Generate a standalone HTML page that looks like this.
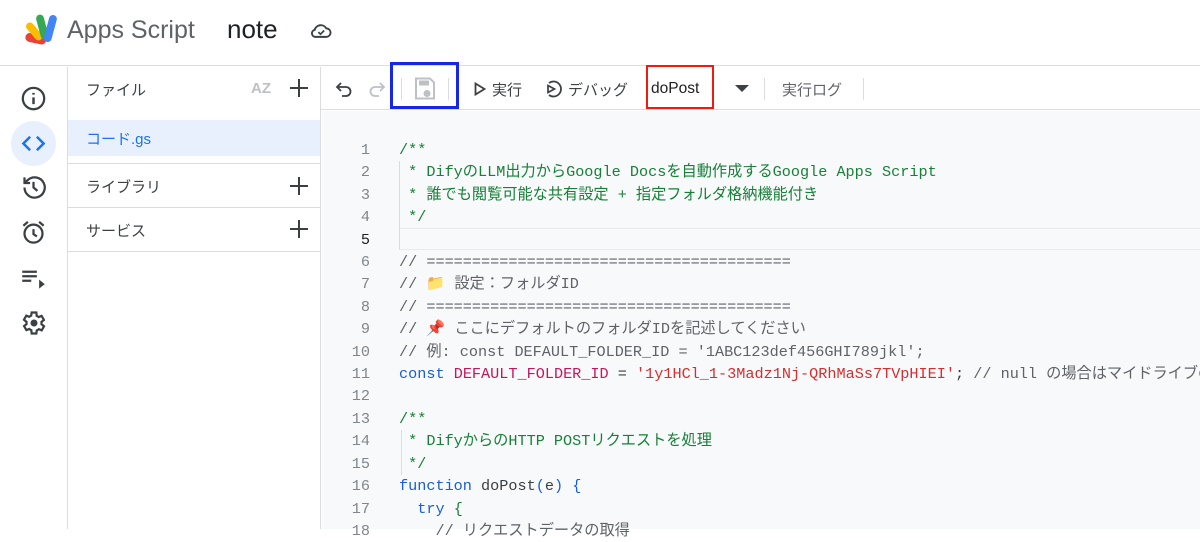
<!DOCTYPE html>
<html><head><meta charset="utf-8"><style>
*{box-sizing:border-box;margin:0;padding:0}
body{width:1200px;height:529px;overflow:hidden;background:#fff;font-family:"Liberation Sans","Noto Sans CJK JP",sans-serif;color:#3c4043;position:relative}
.abs{position:absolute}
.hdr{left:0;top:0;width:1200px;height:66px;border-bottom:1px solid #dadce0}
.rail{left:0;top:67px;width:68px;height:462px;border-right:1px solid #dadce0}
.files{left:68px;top:67px;width:253px;height:462px;border-right:1px solid #dadce0}
.tb{left:321px;top:67px;width:879px;height:43px;border-bottom:1px solid #dadce0;font-size:15px}
.ed{left:322px;top:111px;width:878px;height:418px;background:#f8f9fa}
.code{font-family:"Liberation Mono","Noto Sans CJK JP",monospace;font-size:15.2px;white-space:pre;line-height:22.4px}
.ln{left:320px;width:50px;text-align:right;color:#80868b}
.c{color:#188038}.k{color:#1a5fd3}.v{color:#c2185b}.s{color:#d32f2f}.g{color:#5f6368}
</style></head><body>
<div class="abs hdr">
 <svg class="abs" style="left:23px;top:13px" width="40" height="34" viewBox="0 0 36 30">
  <rect x="2" y="19" width="19" height="8" rx="4" fill="#ea4335" transform="rotate(12 12 23)"/>
  <rect x="7" y="7" width="7" height="19" rx="3.5" fill="#fbbc04" transform="rotate(-40 10 17)"/>
  <rect x="14" y="1" width="7" height="23" rx="3.5" fill="#34a853" transform="rotate(-15 17 13)"/>
  <rect x="21" y="1" width="7" height="25" rx="3.5" fill="#4285f4" transform="rotate(15 24 14)"/>
 </svg>
 <div class="abs" style="left:67px;top:16px;font-size:25px;color:#5f6368">Apps Script</div>
 <div class="abs" style="left:227px;top:14px;font-size:26px;color:#202124">note</div>
 <svg class="abs" style="left:310px;top:22px" width="22" height="17" viewBox="0 0 20 16"><path d="M5 14h10a4 4 0 0 0 0-8 6 6 0 0 0-11 1.5A3.3 3.3 0 0 0 5 14z" fill="none" stroke="#3c4043" stroke-width="1.8"/><path d="M7.5 9.5l2 2 3.5-3.5" fill="none" stroke="#3c4043" stroke-width="1.6"/></svg>
</div>
<div class="abs rail">
 <svg class="abs" style="left:20px;top:18px" width="27" height="27" viewBox="0 0 24 24"><circle cx="12" cy="12" r="9.5" fill="none" stroke="#3c4043" stroke-width="2"/><path d="M12 11v6M12 7v1.5" stroke="#3c4043" stroke-width="2.2"/></svg>
 <div class="abs" style="left:11px;top:54px;width:45px;height:45px;border-radius:50%;background:#e8f0fe"></div>
 <svg class="abs" style="left:20px;top:63px" width="27" height="27" viewBox="0 0 24 24"><path d="M9 6l-6 6 6 6M15 6l6 6-6 6" fill="none" stroke="#1a73e8" stroke-width="2.2"/></svg>
 <svg class="abs" style="left:20px;top:107px" width="27" height="27" viewBox="0 0 24 24"><path d="M4 12a9 9 0 1 0 3-6.7L4 8" fill="none" stroke="#3c4043" stroke-width="2"/><path d="M4 3v5h5" fill="none" stroke="#3c4043" stroke-width="2"/><path d="M12 7v5l3.5 3" fill="none" stroke="#3c4043" stroke-width="2"/></svg>
 <svg class="abs" style="left:20px;top:152px" width="27" height="27" viewBox="0 0 24 24"><circle cx="12" cy="13" r="8" fill="none" stroke="#3c4043" stroke-width="2"/><path d="M12 9v4.5l3 2M3 6l4-3.5M21 6l-4-3.5" fill="none" stroke="#3c4043" stroke-width="2"/></svg>
 <svg class="abs" style="left:20px;top:198px" width="27" height="27" viewBox="0 0 24 24"><path d="M2 6h13M2 10h13M2 14h8" stroke="#3c4043" stroke-width="2"/><path d="M17 13l5 4-5 4z" fill="#3c4043"/></svg>
 <svg class="abs" style="left:20px;top:242px" width="28" height="28" viewBox="0 0 24 24"><path d="M19.4 13a7.5 7.5 0 0 0 0-2l2.1-1.6-2-3.5-2.5 1a7 7 0 0 0-1.7-1L15 3h-4l-.4 2.7a7 7 0 0 0-1.7 1l-2.5-1-2 3.5L6.6 11a7.5 7.5 0 0 0 0 2l-2.1 1.6 2 3.5 2.5-1a7 7 0 0 0 1.7 1L11 21h4l.4-2.7a7 7 0 0 0 1.7-1l2.5 1 2-3.5z" transform="translate(-1 0)" fill="none" stroke="#3c4043" stroke-width="1.9"/><circle cx="12" cy="12" r="3" fill="#3c4043"/></svg>
</div>
<div class="abs files">
 <div class="abs" style="left:18px;top:12px;font-size:15px">ファイル</div>
 <div class="abs" style="left:183px;top:13px;font-size:15px;color:#bdc1c6;font-weight:bold">AZ</div>
 <svg class="abs" style="left:221px;top:11px" width="20" height="20"><path d="M10 1v18M1 10h18" stroke="#3c4043" stroke-width="2"/></svg>
 <div class="abs" style="left:0;top:53px;width:252px;height:36px;background:#e8f0fe"></div>
 <div class="abs" style="left:18px;top:61px;font-size:15px;color:#1a73e8">コード.gs</div>
 <div class="abs" style="left:0;top:96px;width:252px;border-top:1px solid #dadce0"></div>
 <div class="abs" style="left:18px;top:109px;font-size:15px">ライブラリ</div>
 <svg class="abs" style="left:221px;top:109px" width="20" height="20"><path d="M10 1v18M1 10h18" stroke="#3c4043" stroke-width="2"/></svg>
 <div class="abs" style="left:0;top:140px;width:252px;border-top:1px solid #dadce0"></div>
 <div class="abs" style="left:18px;top:153px;font-size:15px">サービス</div>
 <svg class="abs" style="left:221px;top:152px" width="20" height="20"><path d="M10 1v18M1 10h18" stroke="#3c4043" stroke-width="2"/></svg>
 <div class="abs" style="left:0;top:184px;width:252px;border-top:1px solid #dadce0"></div>
</div>
<div class="abs tb">
 <svg class="abs" style="left:14px;top:12px" width="20" height="20" viewBox="0 0 20 20"><path d="M6 4L2 8l4 4M2 8h9a4.5 4.5 0 0 1 0 9H7" fill="none" stroke="#3c4043" stroke-width="1.8"/></svg>
 <svg class="abs" style="left:45px;top:12px" width="20" height="20" viewBox="0 0 20 20"><path d="M14 4l4 4-4 4M18 8H9a4.5 4.5 0 0 0 0 9h4" fill="none" stroke="#bdc1c6" stroke-width="1.8"/></svg>
 <div class="abs" style="left:69px;top:-5px;width:69px;height:47px;border:3px solid #1428e6"></div>
 <div class="abs" style="left:80px;top:11px;height:22px;border-left:1px solid #dadce0"></div>
 <div class="abs" style="left:127px;top:11px;height:22px;border-left:1px solid #dadce0"></div>
 <svg class="abs" style="left:93px;top:9px" width="22" height="25" viewBox="0 0 22 24"><path d="M2 2h14l4 4v16H2z" fill="none" stroke="#bdc1c6" stroke-width="2"/><rect x="5" y="4" width="10" height="5" fill="#bdc1c6"/><circle cx="13" cy="17" r="3.5" fill="#bdc1c6"/></svg>
 <svg class="abs" style="left:153px;top:15px" width="12" height="14"><path d="M1.5 1.5l9 5.5-9 5.5z" fill="none" stroke="#3c4043" stroke-width="1.8"/></svg>
 <div class="abs" style="left:171px;top:12px;color:#3c4043">実行</div>
 <svg class="abs" style="left:224px;top:13px" width="18" height="18" viewBox="0 0 18 18"><path d="M4 3a7.5 7.5 0 1 1 0 12" fill="none" stroke="#3c4043" stroke-width="1.8"/><path d="M3 5.5l6.5 3.5L3 12.5z" fill="none" stroke="#3c4043" stroke-width="1.7"/></svg>
 <div class="abs" style="left:247px;top:12px;color:#3c4043">デバッグ</div>
 <div class="abs" style="left:325px;top:-2px;width:68px;height:44px;border:2px solid #ee1c0e"></div>
 <div class="abs" style="left:330px;top:13px;color:#202124;font-size:15.5px">doPost</div>
 <svg class="abs" style="left:414px;top:17px" width="14" height="10"><path d="M0 1h14L7 8z" fill="#3c4043"/></svg>
 <div class="abs" style="left:443px;top:11px;height:22px;border-left:1px solid #dadce0"></div>
 <div class="abs" style="left:461px;top:12px;color:#5f6368">実行ログ</div>
 <div class="abs" style="left:542px;top:11px;height:22px;border-left:1px solid #dadce0"></div>
</div>
<div class="abs ed"></div>
<div class="abs" style="left:399px;top:228px;width:801px;height:22px;border:1px solid #e8eaed;border-right:none"></div>
<div class="abs" style="left:399px;top:161px;height:89px;border-left:1px solid #dadce0"></div>
<div class="abs" style="left:401px;top:430px;height:45px;border-left:1px solid #dadce0"></div>
<div class="abs code ln" style="top:139px">1
2
3
4
<span style="color:#202124">5</span>
6
7
8
9
10
11
12
13
14
15
16
17
18</div>
<div class="abs code" style="left:399px;top:139px"><span class="c">/**
 * DifyのLLM出力からGoogle Docsを自動作成するGoogle Apps Script
 * 誰でも閲覧可能な共有設定 + 指定フォルダ格納機能付き
 */</span>

<span class="g">// ========================================
// 📁 設定：フォルダID
// ========================================
// 📌 ここにデフォルトのフォルダIDを記述してください
// 例: const DEFAULT_FOLDER_ID = '1ABC123def456GHI789jkl';</span>
<span class="k">const</span> <span class="v">DEFAULT_FOLDER_ID</span> = <span class="s">'1y1HCl_1-3Madz1Nj-QRhMaSs7TVpHIEI'</span>; <span class="g">// null の場合はマイドライブのルート</span>

<span class="c">/**
 * DifyからのHTTP POSTリクエストを処理
 */</span>
<span class="k">function</span> doPost<span class="k">(</span>e<span class="k">)</span> <span class="k">{</span>
  <span class="k">try</span> <span class="c">{</span>
    <span class="g">// リクエストデータの取得</span></div>
</body></html>
